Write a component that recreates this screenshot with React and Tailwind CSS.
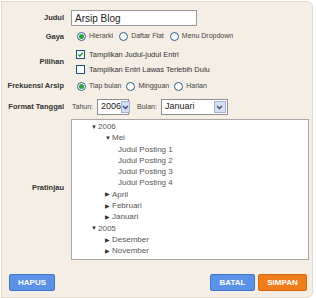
import React from "react";

function Radio({ checked }) {
  return (
    <span className="inline-flex items-center justify-center w-[9px] h-[9px] rounded-full border border-[#2d5f8d] bg-white shrink-0">
      {checked && <span className="w-[5px] h-[5px] rounded-full bg-[#2fa13a]" />}
    </span>
  );
}

function Check({ checked }) {
  return (
    <span className="inline-flex items-center justify-center w-[9px] h-[9px] border border-[#1c5180] bg-white shrink-0">
      {checked && (
        <svg width="7" height="7" viewBox="0 0 8 8">
          <path d="M1.5 4 L3.2 5.8 L6.5 1.8" stroke="#21a121" strokeWidth="1.6" fill="none" />
        </svg>
      )}
    </span>
  );
}

function Select({ value, w }) {
  return (
    <span className={`inline-flex items-center border border-[#8e8f8f] bg-white h-[16px] ${w}`}>
      <span className="flex-1 pl-[3px] text-[9px] text-[#222] font-['Liberation_Sans',sans-serif]">{value}</span>
      <span className="w-[12px] h-[12px] mr-[1px] bg-[#d6dff0] border border-[#a5b4d4] flex items-center justify-center">
        <svg width="7" height="5" viewBox="0 0 7 5"><path d="M1 1 L3.5 3.5 L6 1" stroke="#3a4c7a" strokeWidth="1.4" fill="none" /></svg>
      </span>
    </span>
  );
}

function Tri({ down }) {
  return (
    <span className="inline-block w-[7px] text-[6px] text-[#333] leading-none">{down ? "▼" : "▶"}</span>
  );
}

export default function App() {
  const label = "text-right font-bold text-[7.5px] text-[#333] pr-[7px] whitespace-nowrap";
  const small = "text-[7px] text-[#444] whitespace-nowrap";
  return (
    <div className="w-[316px] h-[298px] bg-white font-['Liberation_Sans',sans-serif]">
      <div className="w-[312px] h-[297px] ml-[1px] mt-[1px] bg-[#f4eee5] border border-[#e2d9cc] rounded-tr-[6px] rounded-br-[6px] flex flex-col">
        <div className="grid grid-cols-[69px_1fr] items-center pt-[8px]">
          <div className={label}>Judul</div>
          <div>
            <div className="w-[126px] h-[16px] border border-[#9a9a9a] bg-white flex items-center pl-[3px] text-[10px] text-[#222]">Arsip Blog</div>
          </div>

          <div className={`${label} mt-[4px]`}>Gaya</div>
          <div className={`flex items-center gap-[3px] mt-[4px] ${small} h-[13px] pl-[6px]`}>
            <Radio checked /><span className="mr-[3px]">Hierarki</span>
            <Radio /><span className="mr-[3px]">Daftar Flat</span>
            <Radio /><span>Menu Dropdown</span>
          </div>

          <div className={`${label} mt-[6px]`}>Pilihan</div>
          <div className="flex flex-col gap-[4px] mt-[6px] text-[7.5px] text-[#333] pl-[5px] whitespace-nowrap">
            <div className="flex items-center gap-[4px] h-[11px]"><Check checked /><span>Tampilkan Judul-judul Entri</span></div>
            <div className="flex items-center gap-[4px] h-[11px]"><Check /><span>Tampilkan Entri Lawas Terlebih Dulu</span></div>
          </div>

          <div className={`${label} mt-[5px]`}>Frekuensi Arsip</div>
          <div className={`flex items-center gap-[3px] mt-[5px] ${small} h-[12px] pl-[6px]`}>
            <Radio checked /><span className="mr-[2px]">Tiap bulan</span>
            <Radio /><span className="mr-[2px]">Mingguan</span>
            <Radio /><span>Harian</span>
          </div>

          <div className={`${label} mt-[7px]`}>Format Tanggal</div>
          <div className={`flex items-center mt-[7px] ${small} h-[16px]`}>
            <span className="ml-[1px] mr-[4px]">Tahun:</span>
            <Select value="2006" w="w-[32px]" />
            <span className="ml-[8px] mr-[4px]">Bulan:</span>
            <Select value="Januari" w="w-[67px]" />
          </div>

          <div className={`${label} self-center`}>Pratinjau</div>
          <div className="mt-[4px]">
            <div className="w-[238px] h-[141px] bg-white border border-[#a8a8a8] text-[8px] text-[#555] leading-[11.3px] pt-[1px]">
              <div className="pl-[19px] flex items-center"><Tri down /><span>2006</span></div>
              <div className="pl-[33px] flex items-center"><Tri down /><span>Mei</span></div>
              <div className="pl-[46px]">Judul Posting 1</div>
              <div className="pl-[46px]">Judul Posting 2</div>
              <div className="pl-[46px]">Judul Posting 3</div>
              <div className="pl-[46px]">Judul Posting 4</div>
              <div className="pl-[33px] flex items-center"><Tri /><span>April</span></div>
              <div className="pl-[33px] flex items-center"><Tri /><span>Februari</span></div>
              <div className="pl-[33px] flex items-center"><Tri /><span>Januari</span></div>
              <div className="pl-[19px] flex items-center"><Tri down /><span>2005</span></div>
              <div className="pl-[33px] flex items-center"><Tri /><span>Desember</span></div>
              <div className="pl-[33px] flex items-center"><Tri /><span>November</span></div>
            </div>
          </div>
        </div>

        <div className="flex items-center mt-[14px] pl-[7px] pr-[5px]">
          <button className="w-[46px] h-[17px] bg-[#5a92e8] border border-[#3f76cc] rounded-[2px] text-white text-[8px] font-bold">HAPUS</button>
          <div className="flex-1" />
          <button className="w-[45px] h-[17px] bg-[#5a92e8] border border-[#3f76cc] rounded-[2px] text-white text-[8px] font-bold">BATAL</button>
          <button className="ml-[3px] w-[49px] h-[17px] bg-[#f07d1b] border border-[#d86510] rounded-[2px] text-white text-[8px] font-bold">SIMPAN</button>
        </div>
      </div>
    </div>
  );
}
